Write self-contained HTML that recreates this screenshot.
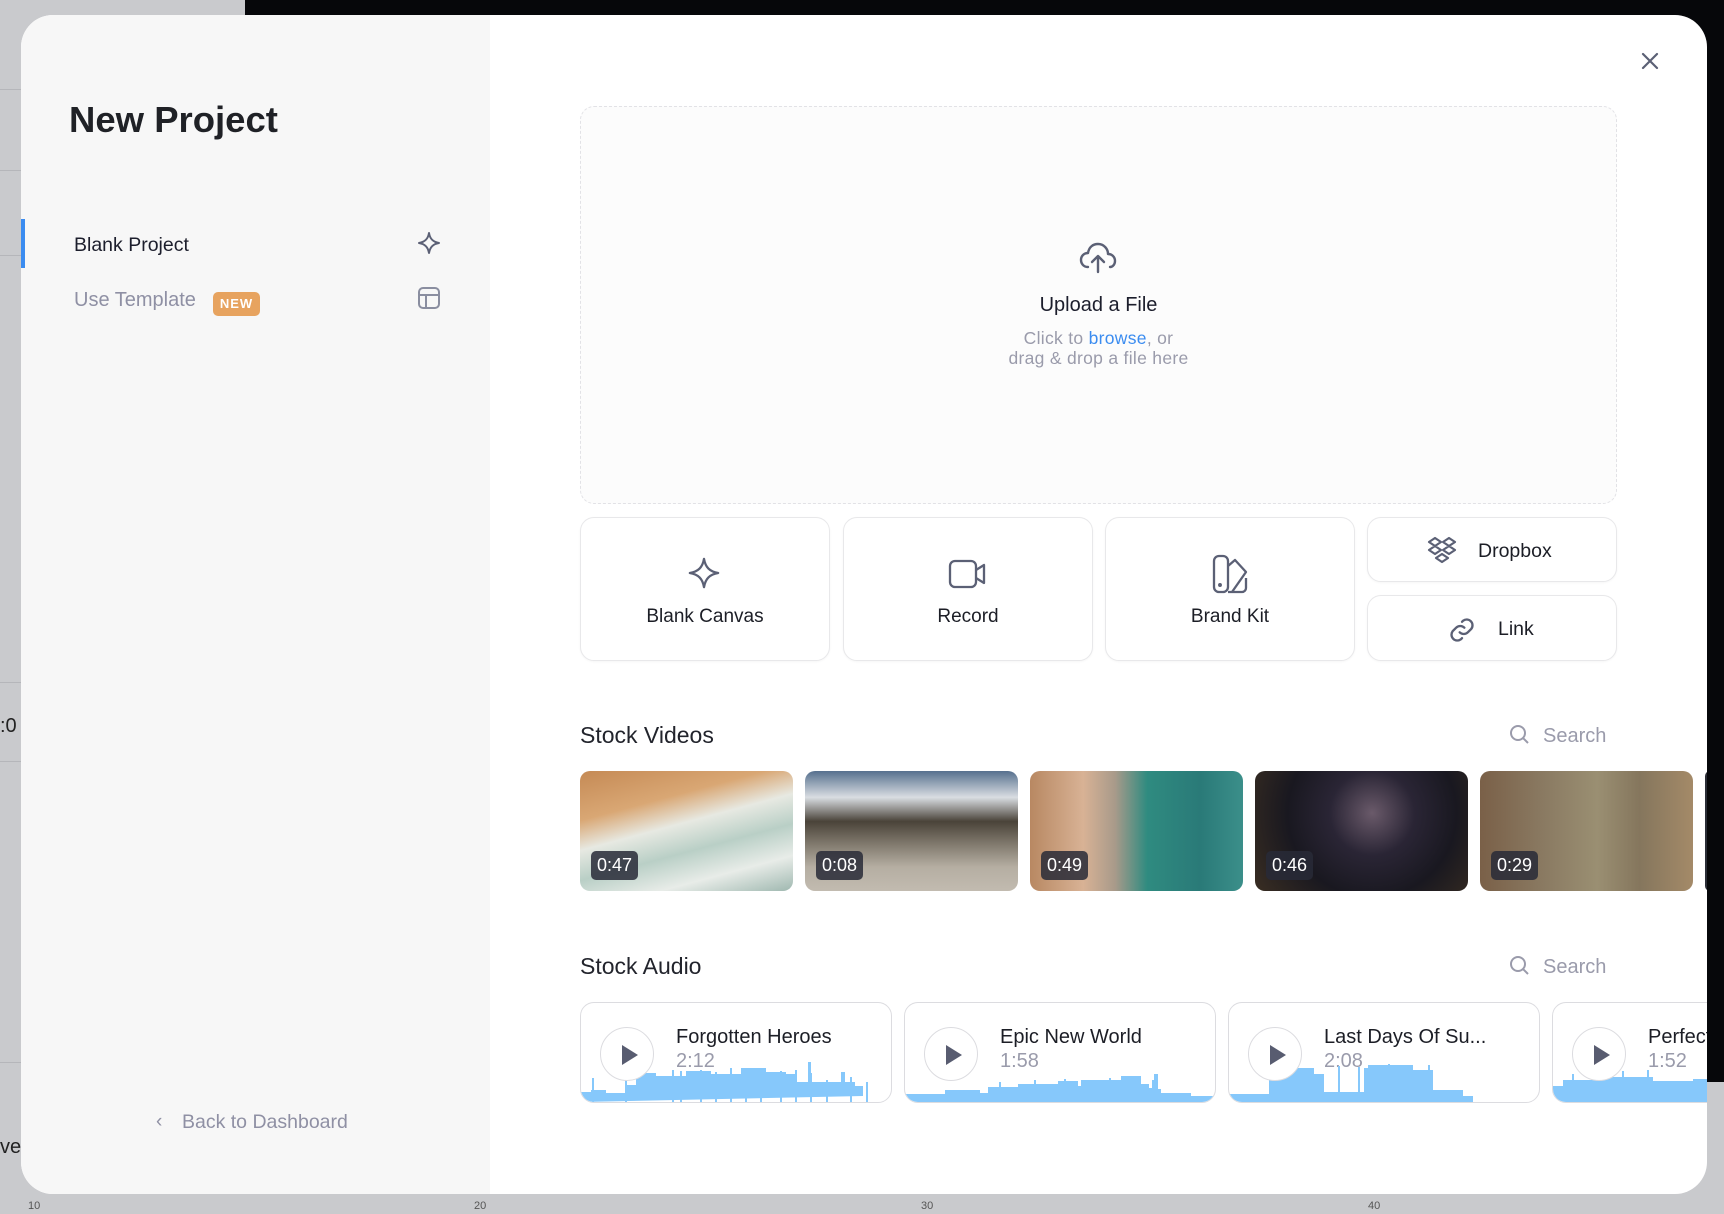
<!DOCTYPE html>
<html><head><meta charset="utf-8"><style>
*{box-sizing:border-box;margin:0;padding:0}
body{width:1724px;height:1214px;overflow:hidden;background:#c9cacd;font-family:"Liberation Sans",sans-serif;position:relative}
.abs{position:absolute}
.modal{position:absolute;left:21px;top:15px;width:1686px;height:1179px;background:#fff;border-radius:32px;overflow:hidden}
.left{position:absolute;left:0;top:0;width:469px;height:100%;background:#f7f7f7}
.card{position:absolute;background:#fff;border:1px solid #e8e8ea;border-radius:14px;box-shadow:0 1px 2px rgba(0,0,0,.04)}
.lbl{font-size:19px;color:#1c1e26;position:absolute;width:100%;text-align:center}
.thumb{position:absolute;top:756px;width:213px;height:120px;border-radius:10px;overflow:hidden}
.badge{position:absolute;left:11px;bottom:11px;background:rgba(40,42,55,.85);color:#fff;font-size:18px;padding:4px 6px;border-radius:5px}
.ac{position:absolute;top:987px;width:312px;height:101px;border:1px solid #dcdce0;border-radius:14px;overflow:hidden;background:#fff}
.play{position:absolute;left:19px;top:24px;width:54px;height:54px;border:1px solid #dcdce0;border-radius:50%;background:#fff;z-index:2}
.play:after{content:"";position:absolute;left:21px;top:17px;border-left:16px solid #585c70;border-top:10px solid transparent;border-bottom:10px solid transparent}
.at{position:absolute;left:95px;top:23px;font-size:20px;color:#1c1e26;white-space:nowrap}
.ad{position:absolute;left:95px;top:47px;font-size:20px;color:#9a9bab}
.wave{position:absolute;left:0;bottom:0;width:312px;height:40px}
.h2{position:absolute;font-size:23px;color:#22242c}
.srch{position:absolute;font-size:20px;color:#9a9bab}
</style></head><body>
<div class="abs" style="left:245px;top:0;width:1479px;height:1082px;background:#06070a"></div>
<div class="abs" style="left:0;top:89px;width:21px;height:1px;background:#b5b6ba"></div>
<div class="abs" style="left:0;top:170px;width:21px;height:1px;background:#b5b6ba"></div>
<div class="abs" style="left:0;top:255px;width:21px;height:1px;background:#b5b6ba"></div>
<div class="abs" style="left:0;top:682px;width:21px;height:1px;background:#b5b6ba"></div>
<div class="abs" style="left:0;top:761px;width:21px;height:1px;background:#b5b6ba"></div>
<div class="abs" style="left:0;top:1062px;width:21px;height:1px;background:#b5b6ba"></div>
<div class="abs" style="left:0;top:715px;font-size:20px;color:#222">:0</div>
<div class="abs" style="left:0;top:1136px;font-size:20px;color:#222">ve</div>
<div class="abs" style="left:28px;top:1200px;font-size:11px;color:#555">10</div>
<div class="abs" style="left:474px;top:1200px;font-size:11px;color:#555">20</div>
<div class="abs" style="left:921px;top:1200px;font-size:11px;color:#555">30</div>
<div class="abs" style="left:1368px;top:1200px;font-size:11px;color:#555">40</div>

<div class="modal">
 <div class="left">
  <div class="abs" style="left:48px;top:84px;font-size:36.5px;font-weight:bold;color:#1f2126">New Project</div>
  <div class="abs" style="left:0;top:204px;width:4px;height:49px;background:#3b8cf0"></div>
  <div class="abs" style="left:53px;top:219px;font-size:19.5px;color:#1c1e2c">Blank Project</div>
  <svg class="abs" style="left:396px;top:216px" width="24" height="24" viewBox="0 0 24 24" fill="none" stroke="#5b6075" stroke-width="2" stroke-linejoin="round"><path d="M12 2 C13 8 16 11 22 12 C16 13 13 16 12 22 C11 16 8 13 2 12 C8 11 11 8 12 2Z"/></svg>
  <div class="abs" style="left:53px;top:274px;font-size:20px;color:#8f90a4">Use Template</div>
  <div class="abs" style="left:192px;top:277px;width:47px;height:24px;background:#e7a35f;border-radius:5px;color:#fff;font-size:13px;font-weight:bold;text-align:center;line-height:24px;letter-spacing:1px">NEW</div>
  <svg class="abs" style="left:396px;top:271px" width="24" height="24" viewBox="0 0 24 24" fill="none" stroke="#8a8ea0" stroke-width="2"><rect x="2" y="2" width="20" height="20" rx="4"/><path d="M2 9h20M9 9v13"/></svg>
  <div class="abs" style="left:135px;top:1096px;font-size:19px;color:#8f90a4">‹</div>
  <div class="abs" style="left:161px;top:1096px;font-size:19.5px;color:#8f90a4">Back to Dashboard</div>
 </div>

 <svg class="abs" style="left:1619px;top:36px" width="20" height="20" viewBox="0 0 20 20" stroke="#5b6075" stroke-width="2.2" stroke-linecap="round"><path d="M3 3L17 17M17 3L3 17"/></svg>

 <div class="abs" style="left:559px;top:91px;width:1037px;height:398px;border:1.5px dashed #e2e2e6;border-radius:14px;background:#fcfcfc"></div>
 <svg class="abs" style="left:1058px;top:226px" width="38" height="34" viewBox="0 0 38 34" fill="none" stroke="#5b6075" stroke-width="2.4" stroke-linecap="round" stroke-linejoin="round"><path d="M9 26C4 26 2 22 2 19C2 15 5 12 9 12C10 6 14 3 19 3C25 3 29 8 29 13C33 13 36 16 36 20C36 23 34 26 31 26"/><path d="M19 31V16M13 21l6-6 6 6"/></svg>
 <div class="abs" style="left:559px;top:279px;width:1037px;text-align:center;font-size:20px;color:#1c1e2c">Upload a File</div>
 <div class="abs" style="left:559px;top:313px;width:1037px;text-align:center;font-size:17.5px;color:#9a9bab;line-height:20px;letter-spacing:.3px">Click to <span style="color:#3b8cf0">browse</span>, or<br>drag &amp; drop a file here</div>

 <div class="card" style="left:559px;top:502px;width:250px;height:144px"><svg class="abs" style="left:106px;top:38px" width="34" height="34" viewBox="0 0 24 24" fill="none" stroke="#5b6075" stroke-width="1.6" stroke-linejoin="round"><path d="M12 2 C13 8 16 11 22 12 C16 13 13 16 12 22 C11 16 8 13 2 12 C8 11 11 8 12 2Z"/></svg><div class="lbl" style="top:88px">Blank Canvas</div></div>
 <div class="card" style="left:822px;top:502px;width:250px;height:144px"><svg class="abs" style="left:104px;top:40px" width="40" height="32" viewBox="0 0 40 32" fill="none" stroke="#5b6075" stroke-width="2.3" stroke-linejoin="round"><rect x="2" y="3" width="26" height="26" rx="5"/><path d="M28 12l8-5v18l-8-5"/></svg><div class="lbl" style="top:88px">Record</div></div>
 <div class="card" style="left:1084px;top:502px;width:250px;height:144px"><svg class="abs" style="left:106px;top:36px" width="38" height="40" viewBox="0 0 38 40" fill="none" stroke="#5b6075" stroke-width="2.3" stroke-linejoin="round"><rect x="2" y="2" width="14" height="36" rx="5"/><path d="M16 12l7-6 11 12-14 20M16 38h14a4 4 0 0 0 4-4v-10"/><circle cx="8" cy="31" r=".8" fill="#5b6075"/></svg><div class="lbl" style="top:88px">Brand Kit</div></div>
 <div class="card" style="left:1346px;top:502px;width:250px;height:65px"><svg class="abs" style="left:59px;top:18px" width="30" height="28" viewBox="0 0 30 28" fill="none" stroke="#5b6075" stroke-width="2.2" stroke-linejoin="round"><path d="M8 2l6 4-6 4-6-4zM22 2l6 4-6 4-6-4zM8 10l6 4-6 4-6-4zM22 10l6 4-6 4-6-4zM15 18l6 4-6 4-6-4z"/></svg><div class="abs" style="left:110px;top:22px;font-size:19.5px;color:#1c1e26">Dropbox</div></div>
 <div class="card" style="left:1346px;top:580px;width:250px;height:66px"><svg class="abs" style="left:80px;top:20px" width="28" height="28" viewBox="0 0 24 24" fill="none" stroke="#5b6075" stroke-width="2" stroke-linecap="round"><path d="M10 14a5 5 0 0 0 7 0l3-3a5 5 0 0 0-7-7l-1 1"/><path d="M14 10a5 5 0 0 0-7 0l-3 3a5 5 0 0 0 7 7l1-1"/></svg><div class="abs" style="left:130px;top:22px;font-size:19.5px;color:#1c1e26">Link</div></div>

 <div class="h2" style="left:559px;top:707px">Stock Videos</div>
 <svg class="abs" style="left:1488px;top:709px" width="22" height="22" viewBox="0 0 22 22" fill="none" stroke="#9a9bab" stroke-width="2"><circle cx="9" cy="9" r="7"/><path d="M14 14l5 5"/></svg>
 <div class="srch" style="left:1522px;top:710px">Search</div>

 <div class="thumb" style="left:559px;background:linear-gradient(165deg,#c58a55 0%,#d9a774 28%,#e7e9e2 45%,#b9cfc6 62%,#e8ece8 80%,#9fb8b0 100%)"><div class="badge">0:47</div></div>
 <div class="thumb" style="left:784px;background:linear-gradient(180deg,#56708e 0%,#d9dde2 22%,#4a4339 42%,#7e776b 60%,#b5aea2 80%,#c2bbb0 100%)"><div class="badge">0:08</div></div>
 <div class="thumb" style="left:1009px;background:linear-gradient(90deg,#b88862 0%,#d8b295 25%,#a89a8a 40%,#2f8b80 55%,#2a7a78 80%,#3b8f8a 100%)"><div class="badge">0:49</div></div>
 <div class="thumb" style="left:1234px;background:radial-gradient(circle at 55% 35%,#6a5a6a 0%,#2a2535 30%,#191820 60%,#3a2e22 100%)"><div class="badge">0:46</div></div>
 <div class="thumb" style="left:1459px;background:linear-gradient(90deg,#7a6048 0%,#8a7a62 30%,#9a8f72 55%,#85765d 75%,#a48a68 100%)"><div class="badge">0:29</div></div>
 <div class="thumb" style="left:1684px;width:10px;background:#2a2d36"></div>

 <div class="h2" style="left:559px;top:938px">Stock Audio</div>
 <svg class="abs" style="left:1488px;top:940px" width="22" height="22" viewBox="0 0 22 22" fill="none" stroke="#9a9bab" stroke-width="2"><circle cx="9" cy="9" r="7"/><path d="M14 14l5 5"/></svg>
 <div class="srch" style="left:1522px;top:941px">Search</div>

 <div class="ac" style="left:559px"><div class="play"></div><div class="at">Forgotten Heroes</div><div class="ad">2:12</div>
  <svg class="wave" viewBox="0 0 312 40" preserveAspectRatio="none"><path fill="#86c8fb" d="M0 40V30h10v-2h15v3h20v-8h10v-12h20v3h30v-5h25v3h30v-6h25v4h20v2h10v8h12v-20h3v20h30v-10h4v10h10v4h8v10z"/><path stroke="#86c8fb" stroke-width="2" d="M12 40V16M45 40V14M92 40V8M150 40V6M180 40V10M246 40V18M270 40V15M286 40V20M100 40V9M120 40V8M135 40V10M165 40V7M200 40V9M215 40V8M230 40V11"/></svg></div>
 <div class="ac" style="left:883px"><div class="play"></div><div class="at">Epic New World</div><div class="ad">1:58</div>
  <svg class="wave" viewBox="0 0 312 40" preserveAspectRatio="none"><path fill="#86c8fb" d="M0 40V32h40v-4h35v3h8v-6h30v-3h40v-3h20v5h3v-6h40v-4h20v8h8v4h3v-8h2v-6h4v15h3v4h30v3h25v8z"/><path stroke="#86c8fb" stroke-width="2" d="M95 40V20M130 40V18M160 40V17M205 40V16M225 40V18"/></svg></div>
 <div class="ac" style="left:1207px"><div class="play"></div><div class="at">Last Days Of Su...</div><div class="ad">2:08</div>
  <svg class="wave" viewBox="0 0 312 40" preserveAspectRatio="none"><path fill="#86c8fb" d="M0 40V32h40v-24h5v-2h40v6h10v18h40v-24h4v-3h45v5h20v20h30v6h10v6z"/><path stroke="#86c8fb" stroke-width="2" d="M60 40V2M110 40V4M160 40V2M200 40V3M75 40V6M130 40V5M180 40V4"/></svg></div>
 <div class="ac" style="left:1531px;width:200px"><div class="play"></div><div class="at">Perfect</div><div class="ad">1:52</div>
  <svg class="wave" viewBox="0 0 312 40" preserveAspectRatio="none" style="width:312px"><path fill="#86c8fb" d="M0 40V24h10v-6h40v-3h50v4h40v-2h20v10h20v6h20v8z"/><path stroke="#86c8fb" stroke-width="2" d="M20 40V12M40 40V10M70 40V9M95 40V8"/></svg></div>
</div>
</body></html>
